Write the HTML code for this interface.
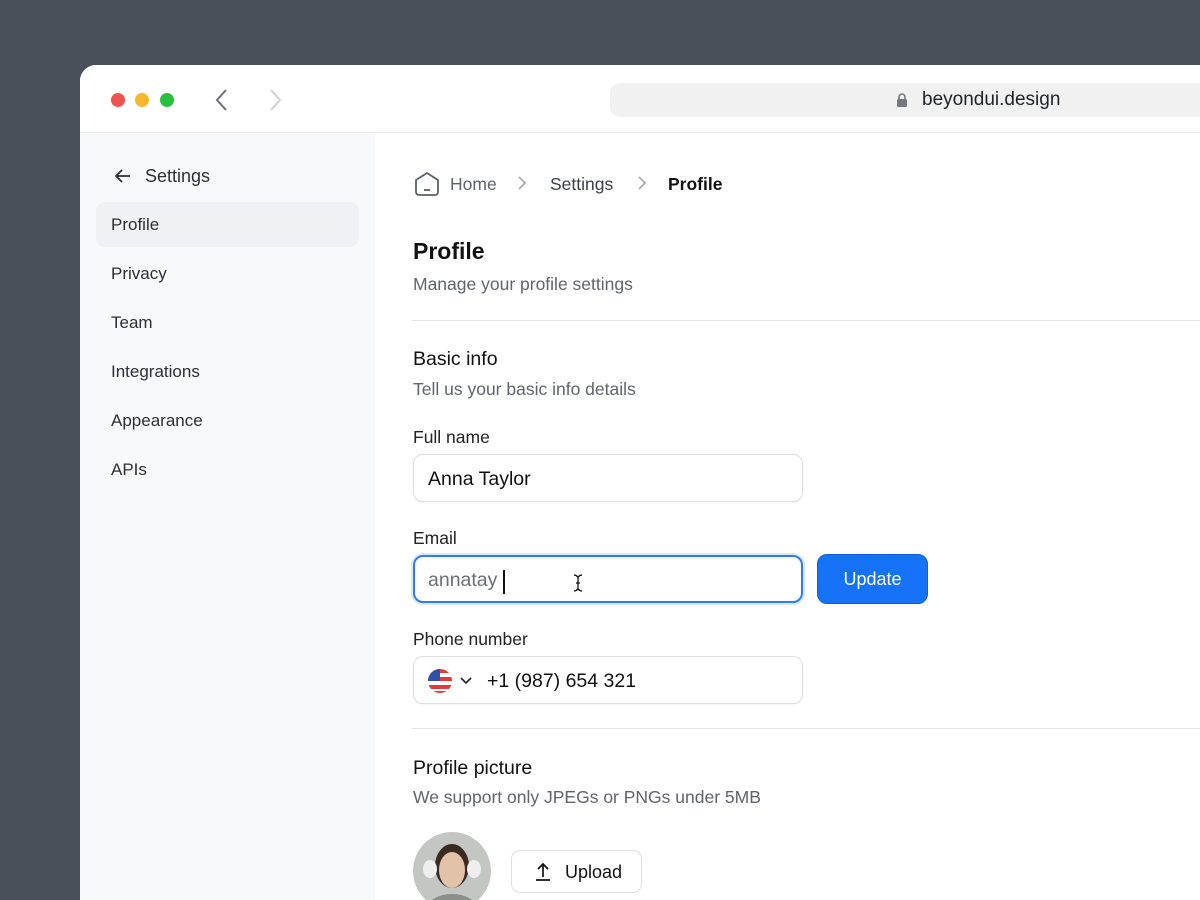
<!DOCTYPE html>
<html><head><style>
*{margin:0;padding:0;box-sizing:border-box}
html,body{width:1200px;height:900px;overflow:hidden}
body{background:#4a5059;font-family:"Liberation Sans",sans-serif;position:relative}
.win{position:absolute;left:80px;top:65px;width:1120px;height:835px;background:#fff;border-radius:16px 0 0 0;overflow:hidden}
.top{position:absolute;left:0;top:0;right:0;height:68px;border-bottom:1px solid #ececef;background:#fff}
.dot{position:absolute;top:28px;width:14px;height:14px;border-radius:50%}
.addr{position:absolute;left:530px;top:18px;width:620px;height:34px;background:#f1f1f2;border-radius:10px}
.addr span{position:absolute;left:312px;top:6px;font-size:19px;color:#1f2329}
.side{position:absolute;left:0;top:69px;width:295px;bottom:0;background:#f8f9fb}
.side .it{position:absolute;left:31px;font-size:17px;color:#2b2f36}
.main{position:absolute;left:295px;top:69px;right:0;bottom:0}
.t{position:absolute;white-space:nowrap}
.inp{position:absolute;left:38px;width:390px;height:48px;border:1px solid #dedfe3;border-radius:10px;background:#fff;box-shadow:0 1px 2px rgba(0,0,0,.05)}
.hr{position:absolute;left:37px;right:0;height:1px;background:#e4e5e8}
</style></head><body>
<div class="win">
<div class="top">
<div class="dot" style="left:31px;background:#f0524f"></div>
<div class="dot" style="left:55px;background:#f7b92b"></div>
<div class="dot" style="left:80px;background:#2ac03f"></div>
<svg style="position:absolute;left:134px;top:23px" width="16" height="24" viewBox="0 0 16 24"><path d="M12 2 3 12l9 10" fill="none" stroke="#6b6f76" stroke-width="2"/></svg>
<svg style="position:absolute;left:187px;top:23px" width="16" height="24" viewBox="0 0 16 24"><path d="M4 2l9 10-9 10" fill="none" stroke="#cfd1d5" stroke-width="2"/></svg>
<div class="addr">
<svg style="position:absolute;left:286px;top:10px" width="12" height="15" viewBox="0 0 12 15"><rect x="1" y="6" width="10" height="8" rx="1.5" fill="#74777d"/><path d="M3 6V4a3 3 0 0 1 6 0v2" fill="none" stroke="#74777d" stroke-width="1.6"/></svg>
<span>beyondui.design</span></div>
</div>
<div class="side">
<svg style="position:absolute;left:34px;top:34px" width="18" height="16" viewBox="0 0 18 16"><path d="M16 8H2M8 2 2 8l6 6" fill="none" stroke="#2b2f36" stroke-width="1.8"/></svg>
<div class="it" style="left:65px;top:32px;font-size:18px">Settings</div>
<div style="position:absolute;left:16px;top:68px;width:263px;height:45px;background:#f0f1f4;border-radius:9px"></div>
<div class="it" style="top:81px">Profile</div>
<div class="it" style="top:130px">Privacy</div>
<div class="it" style="top:179px">Team</div>
<div class="it" style="top:228px">Integrations</div>
<div class="it" style="top:277px">Appearance</div>
<div class="it" style="top:326px">APIs</div>
</div>
<div class="main">
<svg style="position:absolute;left:39px;top:37px" width="26" height="26" viewBox="0 0 26 26"><path d="M2 9 13 2l11 7v12a3 3 0 0 1-3 3H5a3 3 0 0 1-3-3z" fill="none" stroke="#5b6068" stroke-width="1.8" stroke-linejoin="round"/><path d="M10 19h6" stroke="#5b6068" stroke-width="1.8"/></svg>
<div class="t" style="left:75px;top:40px;font-size:17.5px;color:#5f636b">Home</div>
<svg style="position:absolute;left:142px;top:42px" width="10" height="14" viewBox="0 0 10 14"><path d="M2 1l6 6-6 6" fill="none" stroke="#a4a7ad" stroke-width="1.6"/></svg>
<div class="t" style="left:175px;top:40px;font-size:17.5px;color:#3a3e45">Settings</div>
<svg style="position:absolute;left:262px;top:42px" width="10" height="14" viewBox="0 0 10 14"><path d="M2 1l6 6-6 6" fill="none" stroke="#a4a7ad" stroke-width="1.6"/></svg>
<div class="t" style="left:293px;top:40px;font-size:17.5px;color:#111;font-weight:bold">Profile</div>
<div class="t" style="left:38px;top:104px;font-size:23px;color:#111;font-weight:bold">Profile</div>
<div class="t" style="left:38px;top:140px;font-size:17.5px;color:#60646c">Manage your profile settings</div>
<div class="hr" style="top:186px"></div>
<div class="t" style="left:38px;top:214px;font-size:19.5px;color:#111">Basic info</div>
<div class="t" style="left:38px;top:245px;font-size:17.5px;color:#60646c">Tell us your basic info details</div>
<div class="t" style="left:38px;top:293px;font-size:17.5px;color:#222">Full name</div>
<div class="inp" style="top:320px"><span class="t" style="left:14px;top:13px;font-size:19.5px;color:#111">Anna Taylor</span></div>
<div class="t" style="left:38px;top:394px;font-size:17.5px;color:#222">Email</div>
<div class="inp" style="top:421px;border:2px solid #2f7ef0;box-shadow:0 0 0 2px #dbe8fc"><span class="t" style="left:13px;top:12px;font-size:19.5px;color:#6b6f76">annatay</span><span style="position:absolute;left:88px;top:13px;width:2px;height:24px;background:#111"></span>
<svg style="position:absolute;left:158px;top:17px" width="10" height="18" viewBox="0 0 10 18"><path d="M1 1c2 0 3 1 4 2 1-1 2-2 4-2M5 3v12M1 17c2 0 3-1 4-2 1 1 2 2 4 2M3 9h4" fill="none" stroke="#111" stroke-width="1.3"/></svg></div>
<div style="position:absolute;left:442px;top:420px;width:111px;height:50px;background:#1673f7;border:1px solid #0d5fd8;border-radius:10px;color:#fff;font-size:18px;text-align:center;line-height:48px">Update</div>
<div class="t" style="left:38px;top:495px;font-size:17.5px;color:#222">Phone number</div>
<div class="inp" style="top:522px">
<svg style="position:absolute;left:13px;top:11px" width="26" height="26" viewBox="0 0 26 26"><clipPath id="c"><circle cx="13" cy="13" r="12"/></clipPath><g clip-path="url(#c)"><rect width="26" height="26" fill="#fff"/><rect y="1" width="26" height="4" fill="#e23a3a"/><rect y="9" width="26" height="4" fill="#e23a3a"/><rect y="17" width="26" height="4" fill="#e23a3a"/><rect y="23" width="26" height="4" fill="#e23a3a"/><rect width="13" height="13" fill="#2f4fa8"/></g></svg>
<svg style="position:absolute;left:46px;top:19px" width="12" height="9" viewBox="0 0 12 9"><path d="M1 2l5 5 5-5" fill="none" stroke="#222" stroke-width="1.6"/></svg>
<span class="t" style="left:73px;top:13px;font-size:19.5px;color:#111">+1 (987) 654 321</span></div>
<div class="hr" style="top:594px"></div>
<div class="t" style="left:38px;top:623px;font-size:19.5px;color:#111">Profile picture</div>
<div class="t" style="left:38px;top:653px;font-size:17.5px;color:#60646c">We support only JPEGs or PNGs under 5MB</div>
<div style="position:absolute;left:38px;top:698px;width:78px;height:78px;border-radius:50%;overflow:hidden;background:#c3c6c2">
<div style="position:absolute;left:22px;top:12px;width:34px;height:44px;border-radius:50%;background:#3a2a22"></div>
<div style="position:absolute;left:26px;top:20px;width:26px;height:36px;border-radius:50%;background:#e2c3aa"></div>
<div style="position:absolute;left:10px;top:28px;width:14px;height:18px;border-radius:50%;background:#eee"></div>
<div style="position:absolute;left:54px;top:28px;width:14px;height:18px;border-radius:50%;background:#eee"></div>
<div style="position:absolute;left:14px;top:62px;width:50px;height:30px;border-radius:50%;background:#8a8f8a"></div>
</div>
<div style="position:absolute;left:136px;top:716px;width:131px;height:43px;border:1px solid #dedfe3;border-radius:9px;background:#fff">
<svg style="position:absolute;left:23px;top:11px" width="16" height="20" viewBox="0 0 16 20"><path d="M8 15V2M3 7l5-5 5 5M1 18h14" fill="none" stroke="#111" stroke-width="1.7"/></svg>
<span class="t" style="left:53px;top:11px;font-size:18px;color:#111">Upload</span></div>
</div>
</div>
</body></html>
